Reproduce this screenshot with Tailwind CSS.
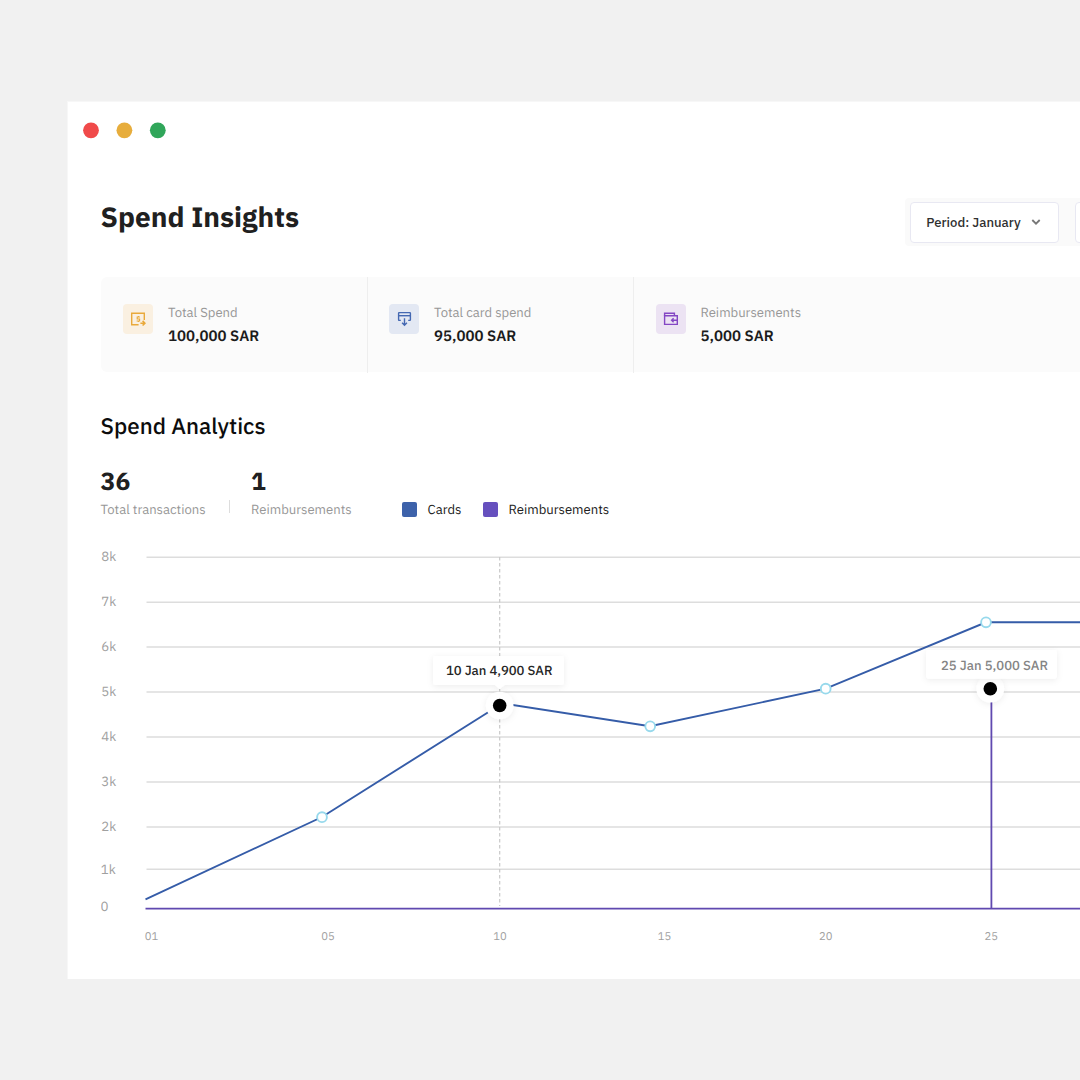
<!DOCTYPE html>
<html lang="en">

<head>
    <meta charset="UTF-8">
    <meta name="viewport" content="width=device-width, initial-scale=1.0">
    <title>Spend Insights</title>
    <script src="https://cdn.jsdelivr.net/npm/@tailwindcss/browser@4"></script>
</head>

<body class="bg-[#f1f1f1] w-[1080px] h-[1080px] overflow-hidden pt-[101px] pl-[67px] font-['IBM_Plex_Sans','Roboto','Liberation_Sans',sans-serif] [text-rendering:geometricPrecision]">
    <!-- Window -->
    <div class="bg-white w-[1013px] h-[878px] border-l border-t border-[#f7f7f7] overflow-hidden">
        <!-- Window controls -->
        <svg class="block mt-5 ml-[15px]" width="84" height="17" viewBox="0 0 84 17">
            <circle cx="8" cy="8.3" r="7.9" fill="#f04a4a" />
            <circle cx="41.4" cy="8.3" r="7.9" fill="#e7ad3c" />
            <circle cx="74.8" cy="8.3" r="7.9" fill="#30a65a" />
        </svg>

        <div class="pl-[33px]">
            <!-- Header -->
            <div class="flex justify-between mt-[59px] h-12">
                <h1 class="text-[28px] leading-[38px] font-bold text-[#202020] -ml-[0.4px]">Spend Insights</h1>
                <div class="flex w-[175px] h-12 shrink-0 overflow-hidden rounded-l bg-[#fafafa] pl-[5px] pt-1 gap-4">
                    <button class="flex shrink-0 items-center w-[149px] h-[41px] rounded border border-[#e8e8f2] bg-white pl-[15px] text-[13.1px] font-medium text-[#303030]">
                        <span class="w-[95px] whitespace-nowrap">Period: January</span>
                        <svg class="ml-[10px] -mt-px" width="10" height="8" viewBox="0 0 10 8" fill="none" stroke="#777" stroke-width="1.8">
                            <path d="M1.3 2 L5 5.7 L8.7 2" />
                        </svg>
                    </button>
                    <button class="shrink-0 w-[150px] h-[41px] rounded border border-[#e8e8f2] bg-white"></button>
                </div>
            </div>

            <!-- Stats -->
            <div class="flex mt-[31px] h-[95px] rounded-l-md bg-[#fbfbfb]">
                <div class="flex w-[266px] h-24 pl-[22px] pt-[27px]">
                    <div class="w-[30px] h-[30px] rounded bg-[#faf0e1] flex items-center justify-center">
                        <svg width="16" height="16" viewBox="0 0 16 16" fill="none" stroke="#e9a93a" stroke-width="1.4">
                            <path d="M8.6 13.7 H1.7 V2.3 H14.3 V9" />
                            <path d="M10 6 H7.2 V8 H9.6 V10 H6.6 M8.4 4.9 V6 M8.4 10 V11.1" stroke-width="1.1" />
                            <path d="M10.4 12.2 H14.6 M12.6 9.9 L14.9 12.2 L12.6 14.5" stroke-width="1.6" />
                        </svg>
                    </div>
                    <div class="ml-[15px]">
                        <p class="text-[13.1px] leading-[18px] text-[#979797]">Total Spend</p>
                        <p class="mt-1 text-[15px] leading-[21px] font-semibold text-[#1c1c1c]">100,000 SAR</p>
                    </div>
                </div>
                <div class="flex w-[266px] h-24 border-l border-[#eeeeee] pl-[21px] pt-[27px]">
                    <div class="w-[30px] h-[30px] rounded bg-[#e3e8f3] flex items-center justify-center">
                        <svg width="16" height="16" viewBox="0 0 16 16" fill="none" stroke="#4468b2" stroke-width="1.4">
                            <path d="M4.8 9.4 H3.2 Q2.6 9.4 2.6 8.8 V2.2 Q2.6 1.6 3.2 1.6 H13.8 Q14.4 1.6 14.4 2.2 V8.8 Q14.4 9.4 13.8 9.4 H12.2" />
                            <path d="M2.6 4.7 H14.4" />
                            <path d="M8.5 7.3 V14 M6.1 11.8 L8.5 14.2 L10.9 11.8" />
                        </svg>
                    </div>
                    <div class="ml-[15px]">
                        <p class="text-[13.1px] leading-[18px] text-[#979797]">Total card spend</p>
                        <p class="mt-1 text-[15px] leading-[21px] font-semibold text-[#1c1c1c]">95,000 SAR</p>
                    </div>
                </div>
                <div class="flex flex-1 h-24 border-l border-[#eeeeee] pl-[22px] pt-[27px]">
                    <div class="w-[30px] h-[30px] rounded bg-[#ece3f3] flex items-center justify-center">
                        <svg width="16" height="16" viewBox="0 0 16 16" fill="none" stroke="#8447c4" stroke-width="1.4">
                            <path d="M1.6 4.7 V13.4 H14.3 V4.7 Z" />
                            <path d="M1.6 5 V2.2 H11.4 V4.7" />
                            <path d="M14 9.2 H8.6 M10.6 7.2 L8.6 9.2 L10.6 11.2" />
                        </svg>
                    </div>
                    <div class="ml-[14.5px]">
                        <p class="text-[13.1px] leading-[18px] text-[#979797]">Reimbursements</p>
                        <p class="mt-1 text-[15px] leading-[21px] font-semibold text-[#1c1c1c]">5,000 SAR</p>
                    </div>
                </div>
            </div>

            <!-- Analytics -->
            <h2 class="mt-[39px] text-[22.4px] leading-8 font-medium text-[#0c0c0c] -ml-[0.4px]">Spend Analytics</h2>
            <div class="flex mt-[22px] h-[55px]">
                <div class="w-32 -ml-[0.4px]">
                    <p class="text-[24.7px] leading-8 font-bold text-[#202020]">36</p>
                    <p class="mt-1 text-[13.1px] leading-[18px] text-[#979797]">Total transactions</p>
                </div>
                <div class="w-px h-[13px] mt-[35px] bg-[#dddddd]"></div>
                <div class="w-[172px] pl-[21.5px]">
                    <p class="text-[24.7px] leading-8 font-bold text-[#202020]">1</p>
                    <p class="mt-1 text-[13.1px] leading-[18px] text-[#979797]">Reimbursements</p>
                </div>
                <div class="flex items-start mt-9 text-[13.1px] leading-[18px] text-[#202020]">
                    <span class="w-[15px] h-[15px] mt-px rounded-xs bg-[#3d62aa]"></span>
                    <span class="ml-[11px] w-[55px]">Cards</span>
                    <span class="w-[15px] h-[15px] mt-px rounded-xs bg-[#6650be]"></span>
                    <span class="ml-[11px]">Reimbursements</span>
                </div>
            </div>

            <!-- Chart -->
            <svg class="block mt-5" width="979" height="410" viewBox="101 540 979 410">
                <defs>
                    <filter id="shadow" x="-20%" y="-50%" width="140%" height="200%">
                        <feDropShadow dx="0" dy="1.5" stdDeviation="3" flood-color="#000" flood-opacity="0.07" />
                    </filter>
                </defs>

                <!-- Grid -->
                <path d="M146.5 557.2H1080M146.5 602.2H1080M146.5 647H1080M146.5 692H1080M146.5 737H1080M146.5 782H1080M146.5 827H1080M146.5 869.2H1080" stroke="#dddddd" stroke-width="1.6" />
                <path d="M499.7 557V906" stroke="#c8c8c8" stroke-width="1.2" stroke-dasharray="3.5 2.5" />

                <!-- Axis labels -->
                <g font-size="13.3" fill="#a0a0a0">
                    <text x="101.2" y="561.3">8k</text>
                    <text x="101.2" y="606.3">7k</text>
                    <text x="101.2" y="651.3">6k</text>
                    <text x="101.2" y="696.3">5k</text>
                    <text x="101.2" y="741.3">4k</text>
                    <text x="101.2" y="786.3">3k</text>
                    <text x="101.2" y="831.3">2k</text>
                    <text x="100.7" y="874.3">1k</text>
                    <text x="100.5" y="911">0</text>
                </g>
                <g font-size="11.2" fill="#a0a0a0" text-anchor="middle">
                    <text x="151.5" y="940">01</text>
                    <text x="328" y="940">05</text>
                    <text x="500" y="940">10</text>
                    <text x="664.5" y="940">15</text>
                    <text x="825.7" y="940">20</text>
                    <text x="991.3" y="940">25</text>
                </g>

                <!-- Series -->
                <path d="M145.5 908.7H1080M991.4 695V908.7" stroke="#6049b0" stroke-width="1.8" fill="none" />
                <path d="M145.5 899.3L322 817L499.7 705M499.7 703L650 726.2L825.7 688.7L986 622.3H1080" stroke="#355ca8" stroke-width="1.9" fill="none" />
                <g fill="#fff" stroke="#97d9ec" stroke-width="1.9">
                    <circle cx="322" cy="817.2" r="4.9" />
                    <circle cx="650.2" cy="726.3" r="4.9" />
                    <circle cx="825.7" cy="688.7" r="4.9" />
                    <circle cx="986" cy="622.3" r="4.9" />
                </g>

                <!-- Tooltips -->
                <g>
                    <circle cx="499.7" cy="705.5" r="13.8" fill="#fff" filter="url(#shadow)" />
                    <path d="M436 656H561Q564 656 564 659V682Q564 685 561 685H504.5L499.7 689L495 685H436Q433 685 433 682V659Q433 656 436 656Z" fill="#fff" filter="url(#shadow)" />
                    <circle cx="499.7" cy="705.5" r="6.8" fill="#000" />
                    <text x="446" y="674.8" font-size="13.1" font-weight="500" fill="#262626" textLength="106.5">10 Jan 4,900 SAR</text>
                </g>
                <g>
                    <circle cx="990.3" cy="688.7" r="13.8" fill="#fff" filter="url(#shadow)" />
                    <rect x="926" y="650" width="131" height="28.7" rx="3" fill="#fff" filter="url(#shadow)" />
                    <circle cx="990.3" cy="688.7" r="6.8" fill="#000" />
                    <text x="941" y="670" font-size="13.1" font-weight="500" fill="#858585" textLength="107">25 Jan 5,000 SAR</text>
                </g>
            </svg>
        </div>
    </div>
</body>

</html>
